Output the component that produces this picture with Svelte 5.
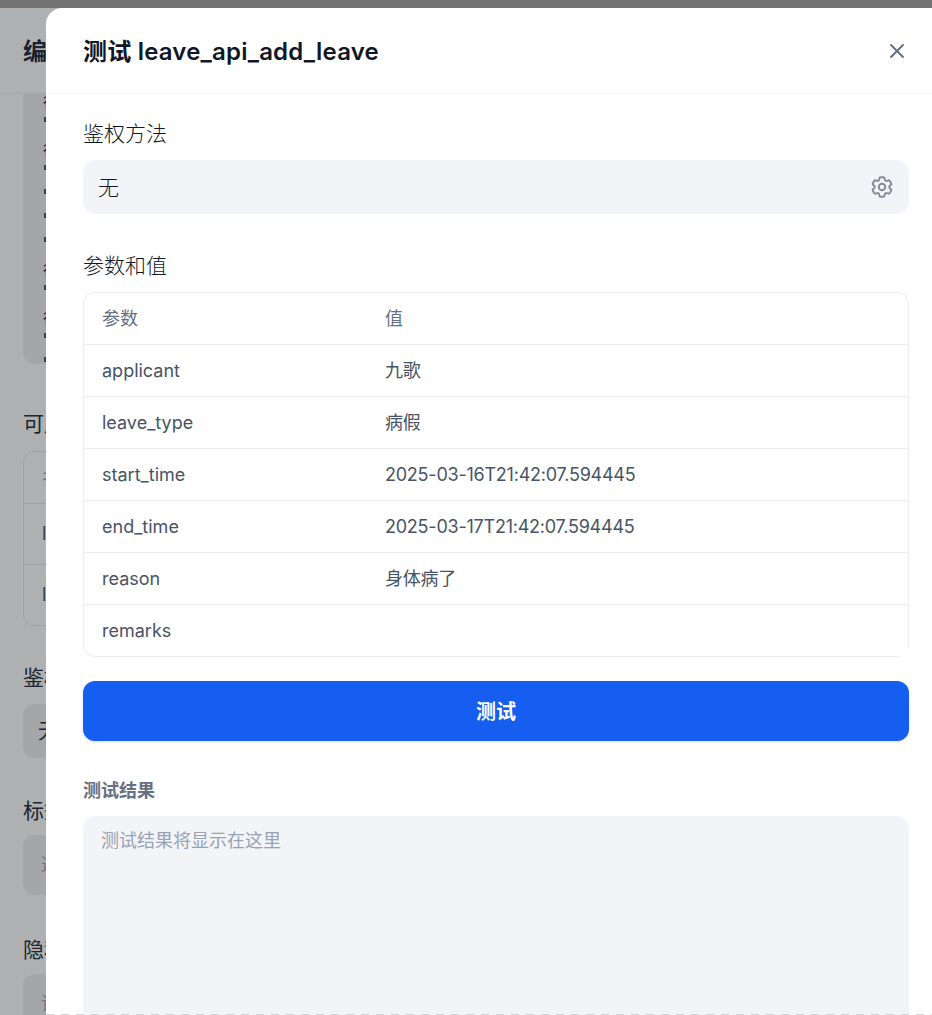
<script>
	const params = [
		{ name: "applicant", value: "九歌" },
		{ name: "leave_type", value: "病假" },
		{ name: "start_time", value: "2025-03-16T21:42:07.594445" },
		{ name: "end_time", value: "2025-03-17T21:42:07.594445" },
		{ name: "reason", value: "身体病了" },
		{ name: "remarks", value: "" }
	];

	// what sticks out to the left of the modal, cut off by it
	const backLines = ["得", "-", "得", "-", "-", "-", "-", "得", "-", "得", "-", "-"];
</script>

<div class="stage">
	<div class="topbar"></div>

	<div class="back">
		<header class="back-head">编辑工具</header>
		<div class="back-body">
			<div class="code">
				{#each backLines as line}
					{#if line === "-"}
						<div class="code-line"><span class="tick"></span></div>
					{:else}
						<div class="code-glyph">{line}</div>
					{/if}
				{/each}
			</div>

			<div class="back-label first">可用工具</div>
			<div class="back-table">
				<div class="back-row muted">名称</div>
				<div class="back-row">leave_api</div>
				<div class="back-row">leave_api</div>
			</div>

			<div class="back-label second">鉴权方法</div>
			<div class="back-select">无</div>

			<div class="back-label third">标签</div>
			<div class="back-input">选择标签</div>

			<div class="back-label fourth">隐私协议</div>
			<div class="back-input">请输入</div>
		</div>
	</div>

	<div class="modal">
		<header class="modal-head">
			<h1>测试 leave_api_add_leave</h1>
			<button class="close" aria-label="关闭">
				<svg viewBox="0 0 24 24" width="24" height="24" fill="none" stroke="currentColor" stroke-width="2" stroke-linecap="round">
					<path d="M6 6l12 12M18 6L6 18" />
				</svg>
			</button>
		</header>

		<div class="modal-body">
			<div class="label">鉴权方法</div>
			<div class="select">
				<span class="select-value">无</span>
				<svg viewBox="0 0 24 24" width="26" height="26" fill="none" stroke="currentColor" stroke-width="1.8" stroke-linecap="round" stroke-linejoin="round">
					<path d="M9.59 3.94c.09-.54.56-.94 1.11-.94h2.59c.55 0 1.02.4 1.11.94l.21 1.28c.06.37.31.68.64.87l.24.14c.33.18.72.24 1.07.1l1.22-.45c.52-.2 1.1.01 1.37.49l1.3 2.25c.27.48.16 1.08-.26 1.43l-1 .83c-.29.24-.43.6-.43.97v.28c0 .37.14.73.43.97l1 .83c.42.35.53.95.26 1.43l-1.3 2.25c-.27.48-.85.69-1.37.49l-1.22-.45c-.35-.14-.74-.08-1.07.1l-.24.14c-.33.19-.58.5-.64.87l-.21 1.28c-.09.54-.56.94-1.11.94h-2.59c-.55 0-1.02-.4-1.11-.94l-.21-1.28c-.06-.37-.31-.68-.64-.87l-.24-.14c-.33-.18-.72-.24-1.07-.1l-1.22.45c-.52.2-1.1-.01-1.37-.49l-1.3-2.25c-.27-.48-.16-1.08.26-1.43l1-.83c.29-.24.43-.6.43-.97v-.28c0-.37-.14-.73-.43-.97l-1-.83c-.42-.35-.53-.95-.26-1.43l1.3-2.25c.27-.48.85-.69 1.37-.49l1.22.45c.35.14.74.08 1.07-.1l.24-.14c.33-.19.58-.5.64-.87z" />
					<circle cx="12" cy="12" r="3" />
				</svg>
			</div>

			<div class="label params-label">参数和值</div>
			<div class="table">
				<div class="row head">
					<div class="col-name">参数</div>
					<div class="col-value">值</div>
				</div>
				{#each params as p}
					<div class="row">
						<div class="col-name">{p.name}</div>
						<div class="col-value">{p.value}</div>
					</div>
				{/each}
			</div>

			<button class="run">测试</button>

			<div class="result-label">测试结果</div>
			<div class="result">测试结果将显示在这里</div>
		</div>
	</div>

	<div class="dashes"></div>
</div>

<style>
	:global(body) {
		margin: 0;
	}

	.stage {
		position: relative;
		height: 1015px;
		overflow: hidden;
		background: #afb0b1;
		font-family: Inter, "Noto Sans CJK SC", sans-serif;
		color: #101828;
	}

	.topbar {
		height: 8px;
		background: #737373;
	}

	.back-head {
		height: 86px;
		box-sizing: border-box;
		padding: 26px 23px 0;
		font-size: 24px;
		line-height: 36px;
		font-weight: 600;
		color: #1a2130;
		border-bottom: 1px solid #a5a6a8;
	}

	.back-body {
		padding: 0 23px;
		color: #20252e;
	}

	.code {
		height: 270px;
		box-sizing: border-box;
		background: #a5a6a8;
		border-radius: 0 0 12px 12px;
		padding-left: 20px;
		font-size: 16px;
		color: #20252e;
	}

	.code-glyph {
		height: 16px;
		line-height: 16px;
		margin-bottom: -3px;
	}

	.code-line + .code-glyph {
		margin-top: 11px;
	}

	.code-line {
		height: 24px;
		display: flex;
		align-items: center;
	}

	.tick {
		width: 3px;
		height: 5px;
		margin-left: 1px;
		background: #3a3f4d;
	}

	.back-label {
		font-size: 21px;
		line-height: 28px;
	}

	.first {
		margin-top: 46px;
	}

	.second {
		margin-top: 38px;
	}

	.third {
		margin-top: 39px;
	}

	.fourth {
		margin-top: 41px;
	}

	.back-table {
		margin-top: 13px;
		border: 1px solid #a0a1a3;
		border-radius: 12px;
		height: 173px;
		font-size: 18px;
		color: #3c4350;
	}

	.back-row {
		height: 51px;
		line-height: 51px;
		padding-left: 18px;
		border-bottom: 1px solid #a0a1a3;
	}

	.back-row + .back-row {
		height: 60px;
		line-height: 60px;
	}

	.back-row:last-child {
		border-bottom: none;
	}

	.back-row.muted {
		color: #71767f;
	}

	.back-select {
		margin-top: 12px;
		height: 54px;
		line-height: 54px;
		padding-left: 15px;
		border-radius: 12px;
		background: #a5a6a8;
		font-size: 21px;
	}

	.back-input {
		margin-top: 10px;
		height: 60px;
		line-height: 60px;
		padding-left: 18px;
		border-radius: 12px;
		background: #a5a6a8;
		font-size: 18px;
		color: #71767f;
	}

	.modal {
		position: absolute;
		left: 46px;
		right: 0;
		top: 8px;
		bottom: 0;
		background: #fff;
		border-top-left-radius: 16px;
		overflow: hidden;
	}

	.modal-head {
		height: 86px;
		box-sizing: border-box;
		padding: 0 23px 0 37px;
		display: flex;
		align-items: center;
		justify-content: space-between;
		border-bottom: 1px solid #f2f4f7;
	}

	h1 {
		margin: 0;
		padding-top: 2px;
		font-size: 24px;
		line-height: 32px;
		font-weight: 600;
		letter-spacing: 0.2px;
		color: #101828;
	}

	.close {
		padding: 0;
		border: none;
		background: none;
		display: flex;
		color: #667085;
	}

	.modal-body {
		padding: 24px 23px 0 37px;
	}

	.label {
		font-size: 21px;
		line-height: 32px;
		font-weight: 300;
		color: #101828;
	}

	.params-label {
		margin-top: 36px;
	}

	.select {
		margin-top: 10px;
		height: 54px;
		box-sizing: border-box;
		padding: 0 14px 0 15px;
		display: flex;
		align-items: center;
		justify-content: space-between;
		background: #f2f4f7;
		border-radius: 12px;
		font-size: 21px;
		font-weight: 300;
		color: #101828;
	}

	.select-value {
		margin-bottom: 2px;
	}

	.select svg {
		color: #858b96;
	}

	.table {
		position: relative;
		margin-top: 10px;
		border: 1px solid #eaecf0;
		border-radius: 12px;
		font-size: 18px;
		line-height: 24px;
		color: #475467;
	}

	/* the bottom right corner of the table has no border line */
	.table::after {
		content: "";
		position: absolute;
		right: -1px;
		bottom: -1px;
		width: 9px;
		height: 9px;
		background: #fff;
	}

	.row {
		height: 52px;
		box-sizing: border-box;
		display: flex;
		align-items: center;
		padding-left: 18px;
		border-bottom: 1px solid #eaecf0;
	}

	.row:last-child {
		border-bottom: none;
		height: 51px;
	}

	.row.head {
		color: #667085;
	}

	.col-name {
		width: 283px;
	}

	.col-value {
		letter-spacing: -0.23px;
	}

	.run {
		display: block;
		width: 100%;
		height: 60px;
		margin-top: 24px;
		padding: 0 0 2px;
		border: none;
		border-radius: 12px;
		background: #155eef;
		box-shadow: 0 1px 3px rgba(16, 24, 40, 0.14);
		color: #fff;
		font-family: inherit;
		font-size: 20px;
		font-weight: 600;
	}

	.result-label {
		margin-top: 38px;
		font-size: 18px;
		line-height: 24px;
		font-weight: 600;
		color: #667085;
	}

	.result {
		margin-top: 13px;
		height: 300px;
		box-sizing: border-box;
		padding: 11px 18px;
		background: #f2f4f7;
		border-radius: 12px;
		font-size: 18px;
		line-height: 28px;
		color: #98a2b3;
	}

	/* dashed edge along the very bottom of the window */
	.dashes {
		position: absolute;
		left: 46px;
		right: 0;
		bottom: 0;
		height: 1px;
		background: repeating-linear-gradient(90deg, #d4d4d6 0 8px, transparent 8px 15px);
	}
</style>
